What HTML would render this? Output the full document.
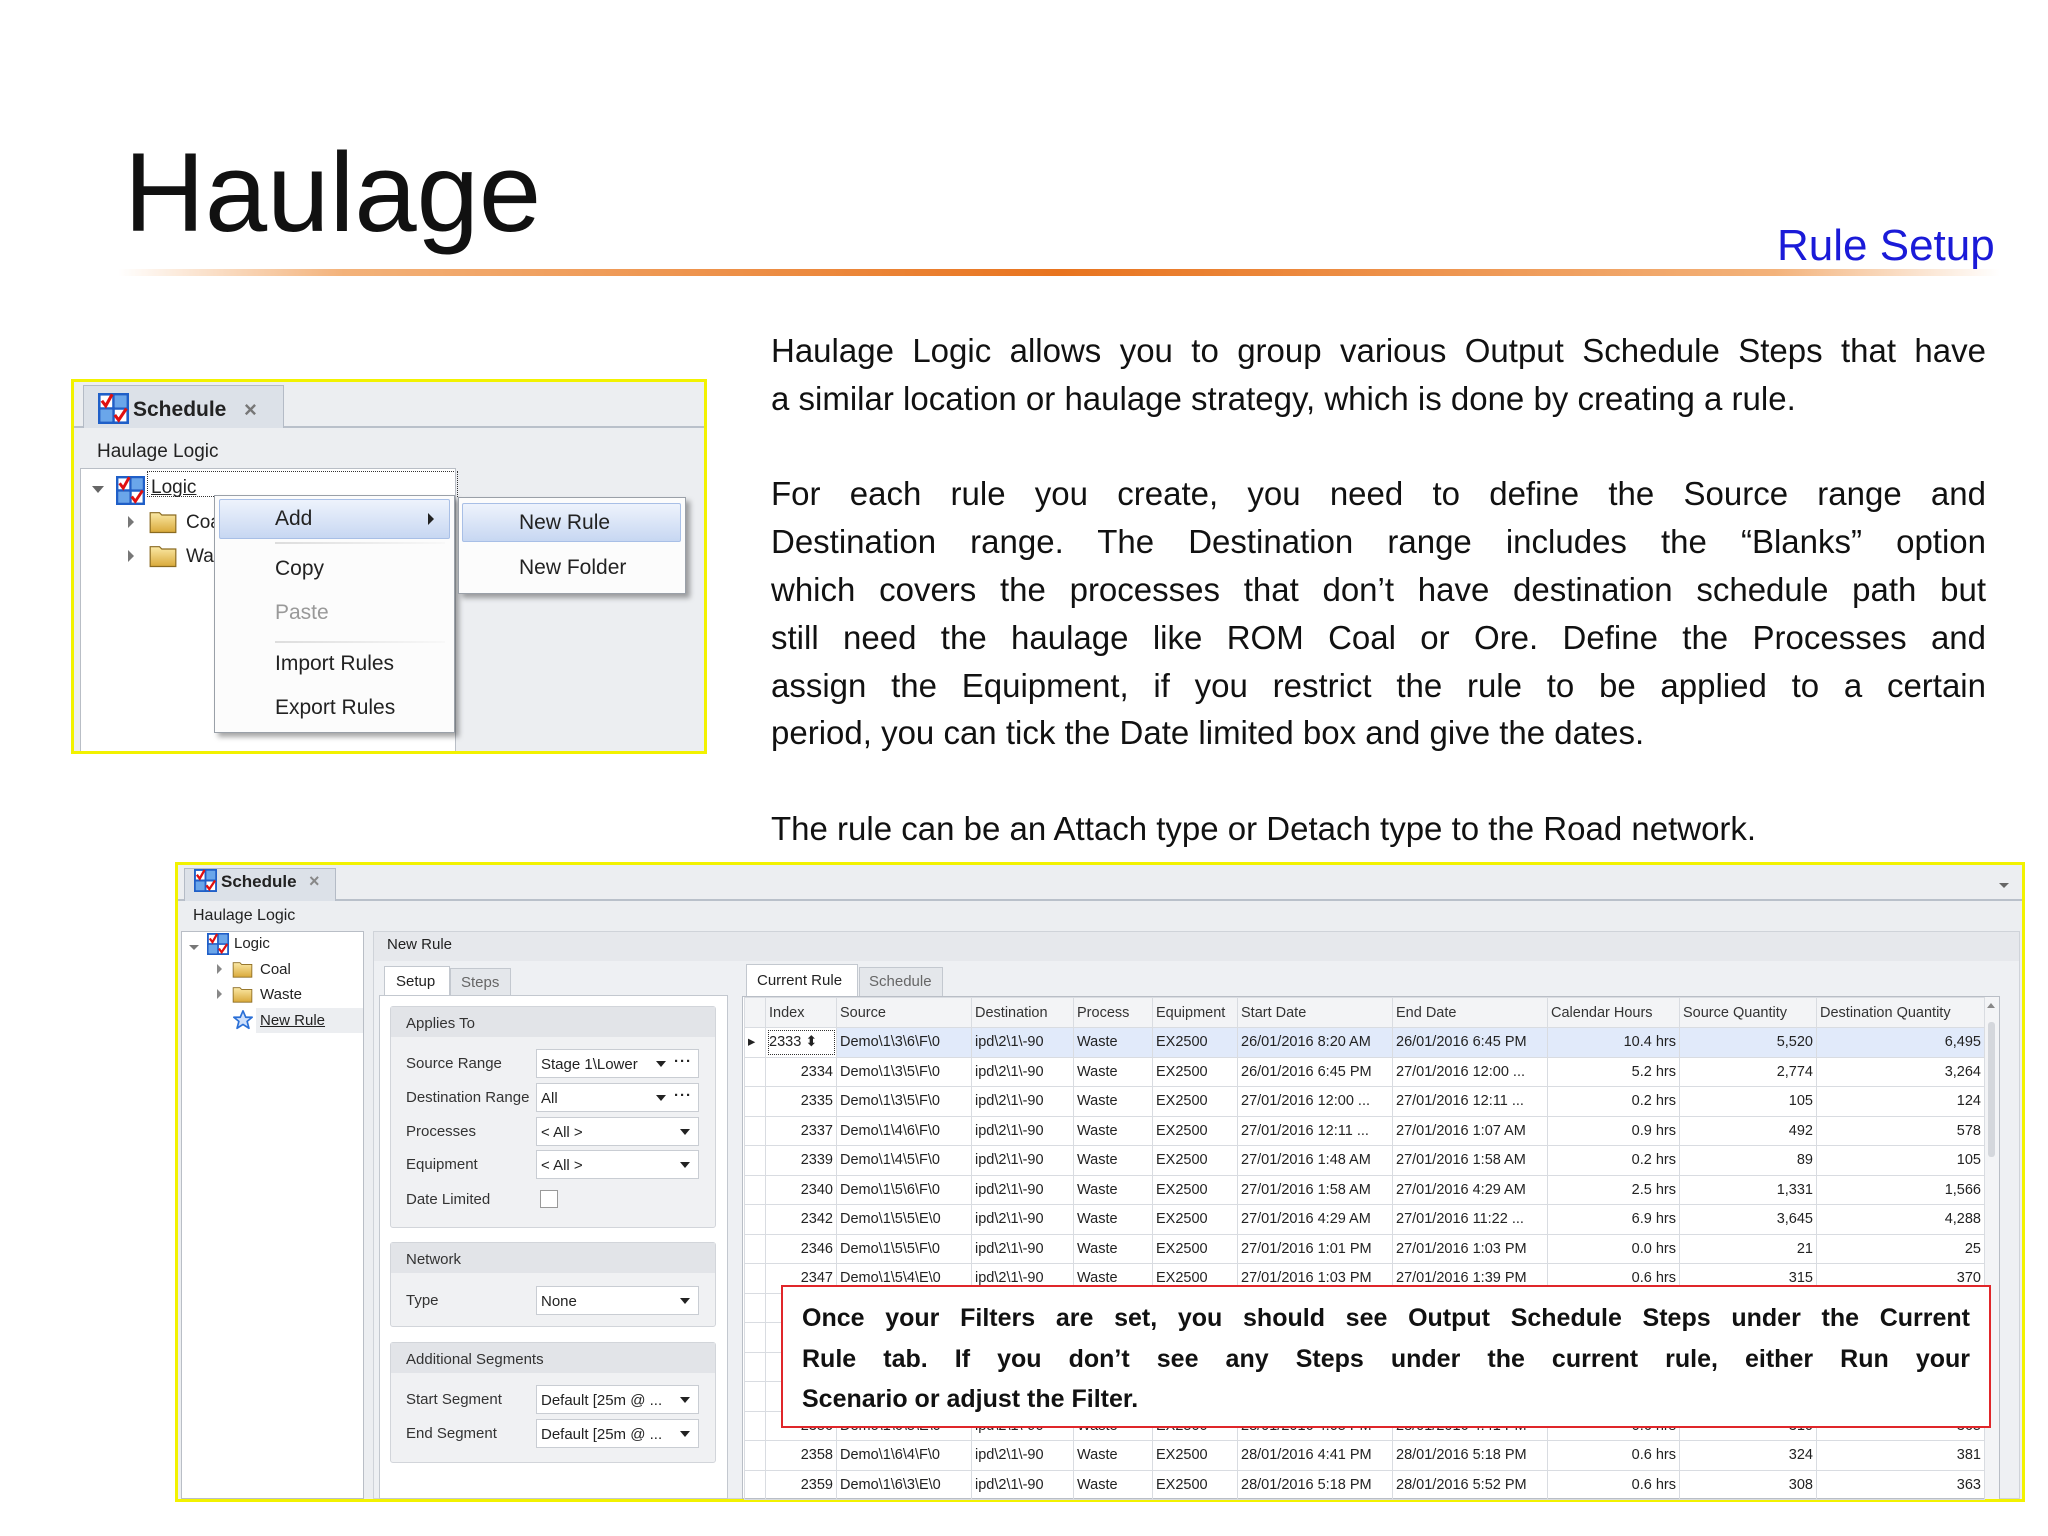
<!DOCTYPE html>
<html><head><meta charset="utf-8">
<style>
*{margin:0;padding:0;box-sizing:border-box}
body{width:2048px;height:1536px;background:#fff;position:relative;overflow:hidden;font-family:"Liberation Sans",sans-serif;color:#111}
.a{position:absolute}
.t{position:absolute;white-space:nowrap;line-height:1}
.para{position:absolute;left:771px;width:1215px;font-size:33px;line-height:47.8px;color:#111}
.j{text-align:justify;text-align-last:justify}
.box{position:absolute;border:3px solid #f2f200;background:#eceef1;overflow:hidden}
.ui{color:#222}
.menu{position:absolute;background:#fcfcfc;border:1px solid #9aa0a8;box-shadow:4px 4px 5px rgba(0,0,0,.35)}
.hl{position:absolute;background:linear-gradient(#eef3fc,#c7d7f2);border:1px solid #a8bfe6;border-radius:2px}
.inp{position:absolute;left:536px;width:163px;height:29px;background:#fff;border:1px solid #c9cdd3;font-size:15px;padding:6px 0 0 4px;white-space:nowrap;color:#222}
.inp .dd{position:absolute;right:8px;top:11px;width:0;height:0;border-left:5px solid transparent;border-right:5px solid transparent;border-top:6px solid #222}
.inp .dd2{right:32px}
.inp .el{position:absolute;right:6px;top:3px;font-size:15px;font-weight:bold;letter-spacing:1px}
.lbl{position:absolute;left:406px;font-size:15px;color:#333;white-space:nowrap;line-height:1}
.grp{position:absolute;left:390px;width:326px;background:#f0f1f3;border:1px solid #d2d5da;border-radius:3px}
.grp .h{height:30px;background:#e2e4e8;font-size:15px;padding:8px 0 0 15px;color:#333}
table{border-collapse:collapse;table-layout:fixed;font-size:14.5px;color:#222}
td{border:1px solid #d9dce1;white-space:nowrap;overflow:hidden;padding:0 3px;height:29.5px}
tr.hd td{height:30px;background:#f3f4f6;color:#333;text-align:left}
td.r{text-align:right}
</style></head><body>

<div class="t" style="left:124px;top:137px;font-size:112px;color:#111">Haulage</div>
<div class="t" style="left:1777px;top:224px;font-size:44px;color:#1a1ad8">Rule Setup</div>
<div class="a" style="left:118px;top:269px;width:1882px;height:7px;background:linear-gradient(90deg,rgba(255,255,255,0),#f3b27a 12%,#e8741f 50%,#f3b27a 88%,rgba(255,255,255,0))"></div>

<div class="para" style="top:327px">
<div class="j">Haulage Logic allows you to group various Output Schedule Steps that have</div>
<div>a similar location or haulage strategy, which is done by creating a rule.</div>
<div>&nbsp;</div>
<div class="j">For each rule you create, you need to define the Source range and</div>
<div class="j">Destination range. The Destination range includes the “Blanks” option</div>
<div class="j">which covers the processes that don’t have destination schedule path but</div>
<div class="j">still need the haulage like ROM Coal or Ore. Define the Processes and</div>
<div class="j">assign the Equipment, if you restrict the rule to be applied to a certain</div>
<div>period, you can tick the Date limited box and give the dates.</div>
<div>&nbsp;</div>
<div>The rule can be an Attach type or Detach type to the Road network.</div>
</div>

<!-- Screenshot 1 -->
<div class="box" style="left:71px;top:379px;width:636px;height:375px">
  <div class="a" style="left:0;top:44px;width:636px;height:2px;background:#b9c0ca"></div>
  <div class="a" style="left:9px;top:3px;width:201px;height:43px;background:#dce1e8;border:1px solid #b4bbc6;border-bottom:none"></div>
  <svg class="a" style="left:24px;top:11px" width="31" height="31" viewBox="0 0 24 24"><rect x="1" y="1" width="22" height="22" fill="#fff" stroke="#1f5fc8" stroke-width="2"/><rect x="13" y="2" width="9" height="9" fill="#6aa6ea"/><rect x="2" y="13" width="9" height="9" fill="#6aa6ea"/><path d="M12 1v22M1 12h22" stroke="#1f5fc8" stroke-width="2"/><path d="M3 6l3 4 5-9M13 17l3 4 6-9" stroke="#e01010" stroke-width="2.4" fill="none"/></svg>
  <div class="t" style="left:59px;top:17px;font-size:21px;font-weight:bold;color:#222">Schedule</div>
  <div class="t" style="left:170px;top:17px;font-size:22px;font-weight:bold;color:#777">×</div>
  <div class="t ui" style="left:23px;top:60px;font-size:19px">Haulage Logic</div>
  <div class="a" style="left:6px;top:86px;width:376px;height:290px;background:#fff;border:1px solid #b9bec6"></div>
  <div class="a" style="left:18px;top:104px;width:0;height:0;border-left:6px solid transparent;border-right:6px solid transparent;border-top:7px solid #666"></div>
  <svg class="a" style="left:42px;top:94px" width="29" height="29" viewBox="0 0 24 24"><rect x="1" y="1" width="22" height="22" fill="#fff" stroke="#1f5fc8" stroke-width="2"/><rect x="13" y="2" width="9" height="9" fill="#6aa6ea"/><rect x="2" y="13" width="9" height="9" fill="#6aa6ea"/><path d="M12 1v22M1 12h22" stroke="#1f5fc8" stroke-width="2"/><path d="M3 6l3 4 5-9M13 17l3 4 6-9" stroke="#e01010" stroke-width="2.4" fill="none"/></svg>
  <div class="a" style="left:73px;top:89px;width:311px;height:26px;border:1px dotted #333"></div>
  <div class="t ui" style="left:77px;top:96px;font-size:19px;text-decoration:underline">Logic</div>
  <div class="a" style="left:54px;top:134px;width:0;height:0;border-top:6px solid transparent;border-bottom:6px solid transparent;border-left:6px solid #777"></div>
  <div class="a" style="left:54px;top:168px;width:0;height:0;border-top:6px solid transparent;border-bottom:6px solid transparent;border-left:6px solid #777"></div>
  <svg class="a" style="left:75px;top:128px" width="28" height="24" viewBox="0 0 24 20"><defs><linearGradient id="f" x1="0" y1="0" x2="0" y2="1"><stop offset="0" stop-color="#fbe9a6"/><stop offset="1" stop-color="#d9a93a"/></linearGradient></defs><path d="M1 2h8l2 2h12v15H1z" fill="url(#f)" stroke="#8a6a20"/></svg>
  <svg class="a" style="left:75px;top:162px" width="28" height="24" viewBox="0 0 24 20"><path d="M1 2h8l2 2h12v15H1z" fill="url(#f)" stroke="#8a6a20"/></svg>
  <div class="t ui" style="left:112px;top:131px;font-size:19px">Coal</div>
  <div class="t ui" style="left:112px;top:165px;font-size:19px">Waste</div>
  <div class="a" style="left:381px;top:86px;width:1px;height:290px;background:#b9bec6"></div>
  <div class="menu" style="left:140px;top:113px;width:241px;height:238px">
    <div class="hl" style="left:4px;top:3px;width:231px;height:40px"></div>
    <div class="t" style="left:60px;top:12px;font-size:21px;color:#222">Add</div>
    <div class="a" style="left:213px;top:17px;width:0;height:0;border-top:6px solid transparent;border-bottom:6px solid transparent;border-left:6px solid #222"></div>
    <div class="a" style="left:60px;top:46px;width:170px;height:2px;background:linear-gradient(90deg,#ddd,#f8f8f8)"></div>
    <div class="t" style="left:60px;top:62px;font-size:21px;color:#222">Copy</div>
    <div class="t" style="left:60px;top:106px;font-size:21px;color:#999">Paste</div>
    <div class="a" style="left:60px;top:145px;width:170px;height:2px;background:linear-gradient(90deg,#ddd,#f8f8f8)"></div>
    <div class="t" style="left:60px;top:157px;font-size:21px;color:#222">Import Rules</div>
    <div class="t" style="left:60px;top:201px;font-size:21px;color:#222">Export Rules</div>
  </div>
  <div class="menu" style="left:384px;top:115px;width:228px;height:97px">
    <div class="hl" style="left:3px;top:5px;width:219px;height:39px"></div>
    <div class="t" style="left:60px;top:14px;font-size:21px;color:#222">New Rule</div>
    <div class="t" style="left:60px;top:59px;font-size:21px;color:#222">New Folder</div>
  </div>
</div>

<!-- Screenshot 2 -->
<div class="box" style="left:175px;top:862px;width:1850px;height:640px">
  <div class="a" style="left:0;top:34px;width:1850px;height:2px;background:#b9c0ca"></div>
  <div class="a" style="left:6px;top:3px;width:152px;height:33px;background:#dce1e8;border:1px solid #b4bbc6;border-bottom:none"></div>
  <div class="a" style="left:1821px;top:18px;width:0;height:0;border-left:5px solid transparent;border-right:5px solid transparent;border-top:5px solid #666"></div>
</div>
<svg class="a" style="left:194px;top:869px" width="23" height="23" viewBox="0 0 24 24"><rect x="1" y="1" width="22" height="22" fill="#fff" stroke="#1f5fc8" stroke-width="2"/><rect x="13" y="2" width="9" height="9" fill="#6aa6ea"/><rect x="2" y="13" width="9" height="9" fill="#6aa6ea"/><path d="M12 1v22M1 12h22" stroke="#1f5fc8" stroke-width="2"/><path d="M3 6l3 4 5-9M13 17l3 4 6-9" stroke="#e01010" stroke-width="2.4" fill="none"/></svg>
<div class="t" style="left:221px;top:873px;font-size:17px;font-weight:bold;color:#222">Schedule</div>
<div class="t" style="left:309px;top:872px;font-size:18px;font-weight:bold;color:#888">×</div>
<div class="t ui" style="left:193px;top:908px;font-size:16px">Haulage Logic</div>
<!-- tree -->
<div class="a" style="left:181px;top:931px;width:183px;height:568px;background:#fff;border:1px solid #b9bec6"></div>
<div class="a" style="left:189px;top:945px;width:0;height:0;border-left:5px solid transparent;border-right:5px solid transparent;border-top:5px solid #777"></div>
<svg class="a" style="left:207px;top:933px" width="22" height="22" viewBox="0 0 24 24"><rect x="1" y="1" width="22" height="22" fill="#fff" stroke="#1f5fc8" stroke-width="2"/><rect x="13" y="2" width="9" height="9" fill="#6aa6ea"/><rect x="2" y="13" width="9" height="9" fill="#6aa6ea"/><path d="M12 1v22M1 12h22" stroke="#1f5fc8" stroke-width="2"/><path d="M3 6l3 4 5-9M13 17l3 4 6-9" stroke="#e01010" stroke-width="2.4" fill="none"/></svg>
<div class="t ui" style="left:234px;top:936px;font-size:15px">Logic</div>
<div class="a" style="left:217px;top:964px;border-top:5px solid transparent;border-bottom:5px solid transparent;border-left:5px solid #888"></div>
<div class="a" style="left:217px;top:989px;border-top:5px solid transparent;border-bottom:5px solid transparent;border-left:5px solid #888"></div>
<svg class="a" style="left:232px;top:961px" width="21" height="17" viewBox="0 0 24 20"><path d="M1 2h8l2 2h12v15H1z" fill="url(#f)" stroke="#8a6a20"/></svg>
<svg class="a" style="left:232px;top:986px" width="21" height="17" viewBox="0 0 24 20"><path d="M1 2h8l2 2h12v15H1z" fill="url(#f)" stroke="#8a6a20"/></svg>
<div class="t ui" style="left:260px;top:962px;font-size:15px">Coal</div>
<div class="t ui" style="left:260px;top:987px;font-size:15px">Waste</div>
<div class="a" style="left:256px;top:1008px;width:107px;height:25px;background:#eceef1"></div>
<svg class="a" style="left:232px;top:1009px" width="22" height="22" viewBox="0 0 24 24"><path d="M12 2l3 7h7l-5.5 4.5 2 7.5L12 16.8 5.5 21l2-7.5L2 9h7z" fill="#cfe0fb" stroke="#2a6fd6" stroke-width="1.8" stroke-linejoin="round"/></svg>
<div class="t ui" style="left:260px;top:1013px;font-size:15px;text-decoration:underline">New Rule</div>
<!-- right panel -->
<div class="a" style="left:373px;top:931px;width:1647px;height:568px;background:#eef0f3;border:1px solid #cfd3d9"></div>
<div class="a" style="left:374px;top:932px;width:1645px;height:29px;background:#e6e8ec"></div>
<div class="t ui" style="left:387px;top:937px;font-size:15px">New Rule</div>
<div class="a" style="left:384px;top:966px;width:66px;height:30px;background:#fff;border:1px solid #c3c8cf;border-bottom:none"></div>
<div class="a" style="left:450px;top:968px;width:61px;height:27px;background:#e4e7eb;border:1px solid #c3c8cf;border-bottom:none"></div>
<div class="t" style="left:396px;top:974px;font-size:15px;color:#222">Setup</div>
<div class="t" style="left:461px;top:975px;font-size:15px;color:#666">Steps</div>
<div class="a" style="left:379px;top:995px;width:349px;height:504px;background:#fff;border:1px solid #c3c8cf"></div>
<div class="grp" style="left:390px;top:1006px;height:222px"><div class="h">Applies To</div></div>
<div class="lbl" style="top:1056px">Source Range</div>
<div class="lbl" style="top:1090px">Destination Range</div>
<div class="lbl" style="top:1124px">Processes</div>
<div class="lbl" style="top:1157px">Equipment</div>
<div class="lbl" style="top:1192px">Date Limited</div>
<div class="inp" style="top:1049px">Stage 1\Lower<span class="dd dd2"></span><span class="el">···</span></div>
<div class="inp" style="top:1083px">All<span class="dd dd2"></span><span class="el">···</span></div>
<div class="inp" style="top:1117px">&lt; All &gt;<span class="dd"></span></div>
<div class="inp" style="top:1150px">&lt; All &gt;<span class="dd"></span></div>
<div class="a" style="left:540px;top:1190px;width:18px;height:18px;background:#fff;border:1px solid #999"></div>
<div class="grp" style="left:390px;top:1242px;height:85px"><div class="h">Network</div></div>
<div class="lbl" style="top:1293px">Type</div>
<div class="inp" style="top:1286px">None<span class="dd"></span></div>
<div class="grp" style="left:390px;top:1342px;height:121px"><div class="h">Additional Segments</div></div>
<div class="lbl" style="top:1392px">Start Segment</div>
<div class="lbl" style="top:1426px">End Segment</div>
<div class="inp" style="top:1385px">Default [25m @ ...<span class="dd"></span></div>
<div class="inp" style="top:1419px">Default [25m @ ...<span class="dd"></span></div>

<!-- grid tabs -->
<div class="a" style="left:746px;top:964px;width:112px;height:33px;background:#fff;border:1px solid #c3c8cf;border-bottom:none"></div>
<div class="a" style="left:859px;top:967px;width:84px;height:30px;background:#e4e7eb;border:1px solid #c3c8cf;border-bottom:none"></div>
<div class="t" style="left:757px;top:973px;font-size:15px;color:#222">Current Rule</div>
<div class="t" style="left:869px;top:974px;font-size:15px;color:#666">Schedule</div>
<div class="a" style="left:742px;top:996px;width:1258px;height:503px;background:#fff;border:1px solid #b9bec6"></div>
<div class="a" style="left:1984px;top:997px;width:15px;height:502px;background:#f3f4f6"></div>
<div class="a" style="left:1988px;top:1022px;width:7px;height:135px;background:#d4d7dc;border-radius:3px"></div>
<div class="a" style="left:1987px;top:1003px;border-left:4px solid transparent;border-right:4px solid transparent;border-bottom:5px solid #888"></div>
<table class="a" style="left:744px;top:997px;width:1240px">
<colgroup><col style="width:21px"><col style="width:71px"><col style="width:135px"><col style="width:102px"><col style="width:79px"><col style="width:85px"><col style="width:155px"><col style="width:155px"><col style="width:132px"><col style="width:137px"><col style="width:168px"></colgroup>
<tr class="hd"><td></td><td>Index</td><td>Source</td><td>Destination</td><td>Process</td><td>Equipment</td><td>Start Date</td><td>End Date</td><td>Calendar Hours</td><td>Source Quantity</td><td>Destination Quantity</td></tr>
<tr style="background:#e1eafa"><td style="background:#fff">▸</td><td style="background:#fff;outline:1px dotted #333;outline-offset:-3px">2333 ⬍</td><td>Demo\1\3\6\F\0</td><td>ipd\2\1\-90</td><td>Waste</td><td>EX2500</td><td>26/01/2016 8:20 AM</td><td>26/01/2016 6:45 PM</td><td class="r">10.4 hrs</td><td class="r">5,520</td><td class="r">6,495</td></tr>
<tr><td></td><td class="r">2334</td><td>Demo\1\3\5\F\0</td><td>ipd\2\1\-90</td><td>Waste</td><td>EX2500</td><td>26/01/2016 6:45 PM</td><td>27/01/2016 12:00 ...</td><td class="r">5.2 hrs</td><td class="r">2,774</td><td class="r">3,264</td></tr>
<tr><td></td><td class="r">2335</td><td>Demo\1\3\5\F\0</td><td>ipd\2\1\-90</td><td>Waste</td><td>EX2500</td><td>27/01/2016 12:00 ...</td><td>27/01/2016 12:11 ...</td><td class="r">0.2 hrs</td><td class="r">105</td><td class="r">124</td></tr>
<tr><td></td><td class="r">2337</td><td>Demo\1\4\6\F\0</td><td>ipd\2\1\-90</td><td>Waste</td><td>EX2500</td><td>27/01/2016 12:11 ...</td><td>27/01/2016 1:07 AM</td><td class="r">0.9 hrs</td><td class="r">492</td><td class="r">578</td></tr>
<tr><td></td><td class="r">2339</td><td>Demo\1\4\5\F\0</td><td>ipd\2\1\-90</td><td>Waste</td><td>EX2500</td><td>27/01/2016 1:48 AM</td><td>27/01/2016 1:58 AM</td><td class="r">0.2 hrs</td><td class="r">89</td><td class="r">105</td></tr>
<tr><td></td><td class="r">2340</td><td>Demo\1\5\6\F\0</td><td>ipd\2\1\-90</td><td>Waste</td><td>EX2500</td><td>27/01/2016 1:58 AM</td><td>27/01/2016 4:29 AM</td><td class="r">2.5 hrs</td><td class="r">1,331</td><td class="r">1,566</td></tr>
<tr><td></td><td class="r">2342</td><td>Demo\1\5\5\E\0</td><td>ipd\2\1\-90</td><td>Waste</td><td>EX2500</td><td>27/01/2016 4:29 AM</td><td>27/01/2016 11:22 ...</td><td class="r">6.9 hrs</td><td class="r">3,645</td><td class="r">4,288</td></tr>
<tr><td></td><td class="r">2346</td><td>Demo\1\5\5\F\0</td><td>ipd\2\1\-90</td><td>Waste</td><td>EX2500</td><td>27/01/2016 1:01 PM</td><td>27/01/2016 1:03 PM</td><td class="r">0.0 hrs</td><td class="r">21</td><td class="r">25</td></tr>
<tr><td></td><td class="r">2347</td><td>Demo\1\5\4\E\0</td><td>ipd\2\1\-90</td><td>Waste</td><td>EX2500</td><td>27/01/2016 1:03 PM</td><td>27/01/2016 1:39 PM</td><td class="r">0.6 hrs</td><td class="r">315</td><td class="r">370</td></tr>
<tr><td></td><td class="r">2348</td><td>Demo\1\5\3\F\0</td><td>ipd\2\1\-90</td><td>Waste</td><td>EX2500</td><td>27/01/2016 1:39 PM</td><td>27/01/2016 2:10 PM</td><td class="r">0.5 hrs</td><td class="r">280</td><td class="r">330</td></tr>
<tr><td></td><td class="r">2350</td><td>Demo\1\5\3\E\0</td><td>ipd\2\1\-90</td><td>Waste</td><td>EX2500</td><td>27/01/2016 2:10 PM</td><td>27/01/2016 2:52 PM</td><td class="r">0.7 hrs</td><td class="r">350</td><td class="r">412</td></tr>
<tr><td></td><td class="r">2352</td><td>Demo\1\6\6\F\0</td><td>ipd\2\1\-90</td><td>Waste</td><td>EX2500</td><td>28/01/2016 2:52 PM</td><td>28/01/2016 3:30 PM</td><td class="r">0.6 hrs</td><td class="r">301</td><td class="r">354</td></tr>
<tr><td></td><td class="r">2354</td><td>Demo\1\6\5\F\0</td><td>ipd\2\1\-90</td><td>Waste</td><td>EX2500</td><td>28/01/2016 3:30 PM</td><td>28/01/2016 4:05 PM</td><td class="r">0.6 hrs</td><td class="r">298</td><td class="r">350</td></tr>
<tr><td></td><td class="r">2356</td><td>Demo\1\6\5\E\0</td><td>ipd\2\1\-90</td><td>Waste</td><td>EX2500</td><td>28/01/2016 4:05 PM</td><td>28/01/2016 4:41 PM</td><td class="r">0.6 hrs</td><td class="r">310</td><td class="r">365</td></tr>
<tr><td></td><td class="r">2358</td><td>Demo\1\6\4\F\0</td><td>ipd\2\1\-90</td><td>Waste</td><td>EX2500</td><td>28/01/2016 4:41 PM</td><td>28/01/2016 5:18 PM</td><td class="r">0.6 hrs</td><td class="r">324</td><td class="r">381</td></tr>
<tr><td></td><td class="r">2359</td><td>Demo\1\6\3\E\0</td><td>ipd\2\1\-90</td><td>Waste</td><td>EX2500</td><td>28/01/2016 5:18 PM</td><td>28/01/2016 5:52 PM</td><td class="r">0.6 hrs</td><td class="r">308</td><td class="r">363</td></tr>
</table>

<div class="a" style="left:781px;top:1285px;width:1210px;height:143px;background:#fff;border:2px solid #e0262a"></div>
<div class="a" style="left:802px;top:1298px;width:1168px;font-size:25px;font-weight:bold;line-height:40.5px;color:#111">
<div class="j">Once your Filters are set, you should see Output Schedule Steps under the Current</div>
<div class="j">Rule tab. If you don’t see any Steps under the current rule, either Run your</div>
<div>Scenario or adjust the Filter.</div>
</div>
</body></html>
